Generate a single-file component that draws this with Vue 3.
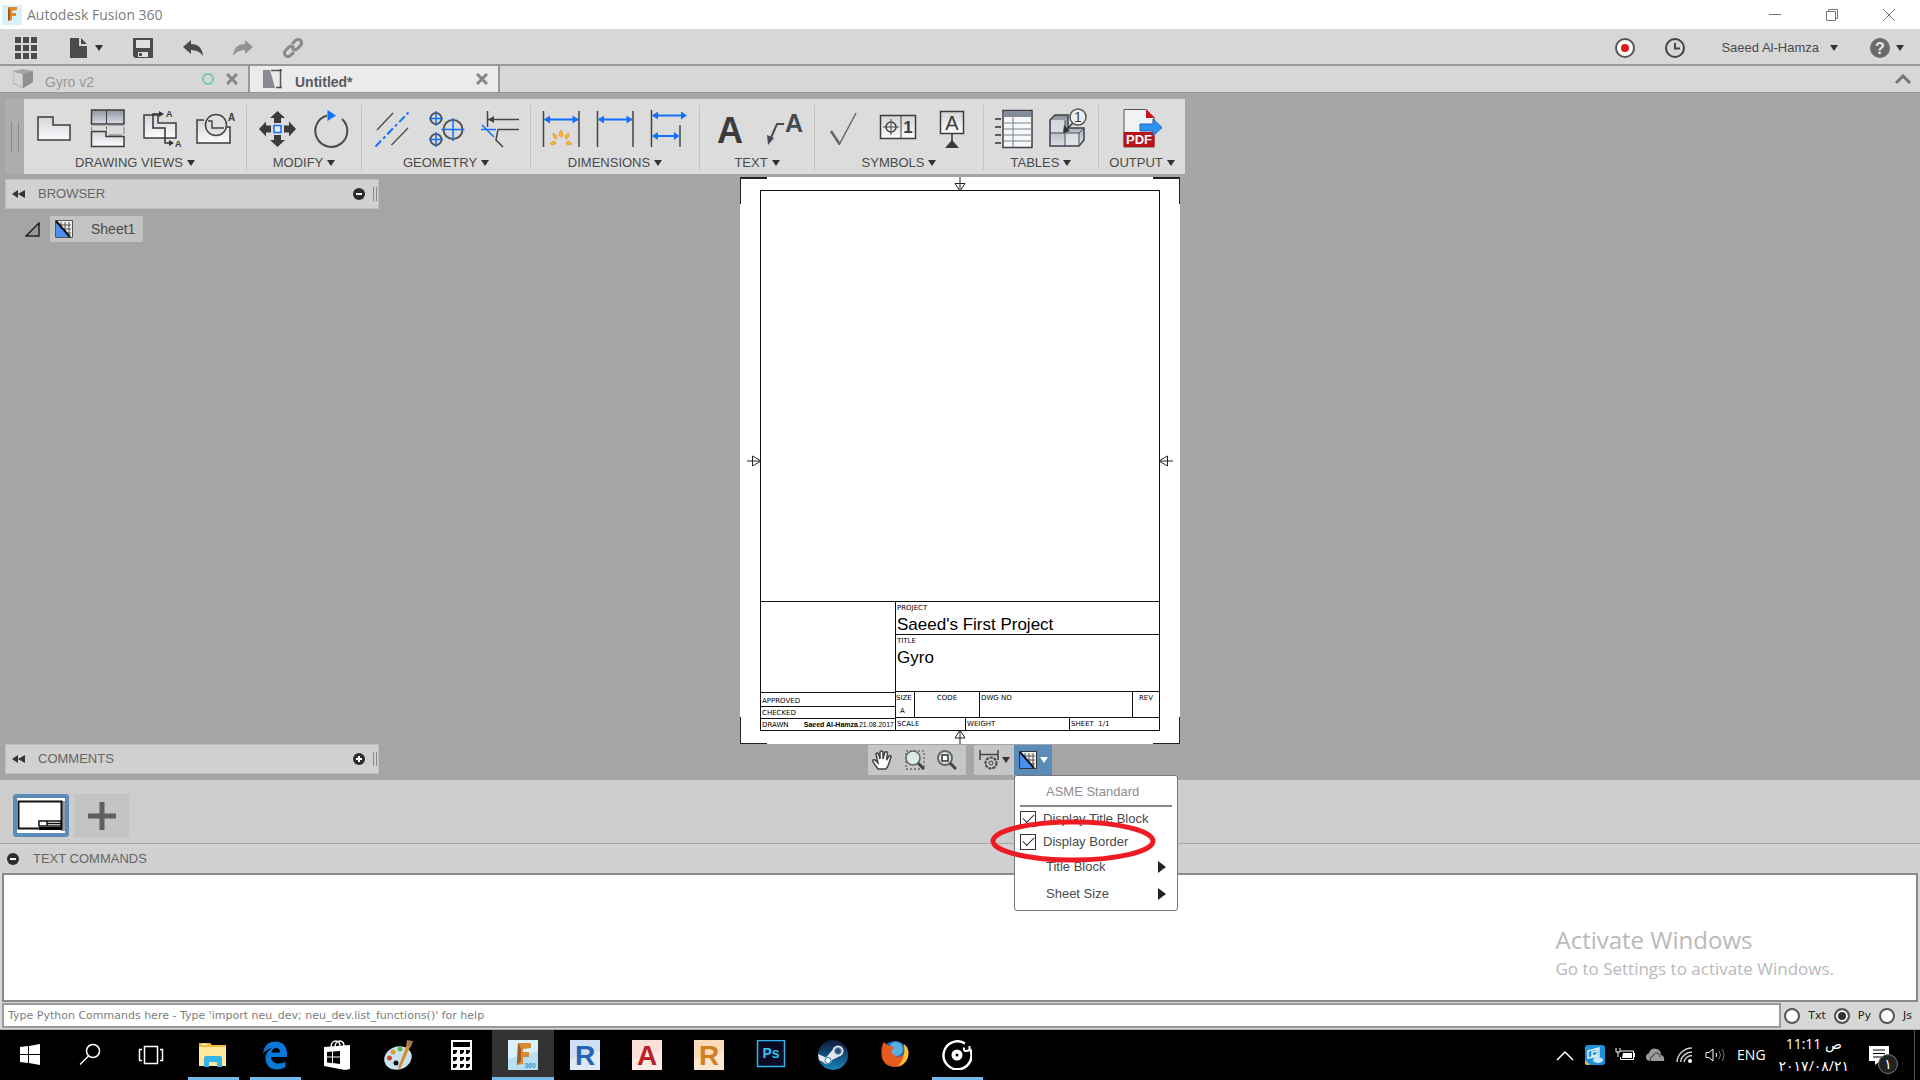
<script setup>
  import { ref } from 'vue'

  const groups = [
    {
      name: 'DRAWING VIEWS',
      tools: [
        { label: 'Base view', svg: '<path d="M6 11H21V19H38V34H6Z" fill="url(#metal)" stroke="#3c3c3c" stroke-width="1.5"/>' },
        { label: 'Projected view', svg: '<path d="M5.5 4H38V18H5.5Z" fill="url(#steel)" stroke="#3c3c3c" stroke-width="1.5"/><path d="M20.5 4V18" stroke="#3c3c3c"/><path d="M5.5 19H19M22 19H38M5.5 21V24M20.5 20V24M38 21V28M23 29H36" stroke="#777" fill="none"/><path d="M5.5 25.5H20V30.5H38V40.5H5.5Z" fill="url(#metal)" stroke="#3c3c3c" stroke-width="1.5"/>' },
        { label: 'Section view', svg: '<path d="M4 9H18V17H36V32H4Z" fill="url(#metal)" stroke="#3c3c3c" stroke-width="1.5"/><path d="M21 8H13V22H25V37H31" fill="none" stroke="#333" stroke-width="1.5"/><path d="M19 5L24 8L19 11ZM29 34L34 37L29 40Z" fill="#333"/><text x="26" y="11" font-size="9" font-weight="bold">A</text><text x="35" y="41" font-size="9" font-weight="bold">A</text>' },
        { label: 'Detail view', svg: '<path d="M3 14H36V37H3Z" fill="url(#metal)"/><path d="M10 14H3V37H36V21H33" fill="none" stroke="#3c3c3c" stroke-width="1.5"/><circle cx="22" cy="19" r="10.5" fill="#dfe0e2" stroke="#444" stroke-width="1.5"/><path d="M14 15H18V22H30" fill="none" stroke="#444" stroke-width="1.5"/><text x="34" y="15" font-size="10" font-weight="bold">A</text>' }
      ]
    },
    {
      name: 'MODIFY',
      tools: [
        { label: 'Move', svg: '<g fill="#3b3b3b"><path d="M22.5 5L30 12H26V17H19V12H15Z"/><path d="M22.5 41L30 34H26V29H19V34H15Z"/><path d="M4 23L11 15.5V19.5H16V26.5H11V30.5Z"/><path d="M41 23L34 15.5V19.5H29V26.5H34V30.5Z"/></g><path d="M19 19.5H26V26.5H19Z" fill="#e6eefa" stroke="#1170ff" stroke-width="1.5"/>' },
        { label: 'Rotate', svg: '<path d="M33 13A16 16 0 1 1 18 9.5" fill="none" stroke="#4b4b4b" stroke-width="2"/><path d="M18.5 4L27 9.5L18.5 15Z" fill="#1170ff"/>' }
      ]
    },
    {
      name: 'GEOMETRY',
      tools: [
        { label: 'Centerline', svg: '<path d="M7 24L23 7M21.5 39L38 22" stroke="#555" stroke-width="1.5"/><path d="M5.5 40.5L38.5 6.5" stroke="#1170ff" stroke-width="2" stroke-dasharray="8 3 3 3"/>' },
        { label: 'Center mark pattern', svg: '<g fill="none" stroke="#555" stroke-width="2"><circle cx="12" cy="12.5" r="5.5"/><circle cx="12" cy="33.5" r="5.5"/><circle cx="29" cy="23.5" r="9.5"/></g><path d="M12 5V20M5 12.5H19M12 26V41M5 33.5H19M29 12V35M17.5 23.5H40.5" stroke="#1170ff" stroke-width="1.5"/>' },
        { label: 'Edge extension', svg: '<path d="M9.5 5V21M10 13.5H41M41 23.5H20L18 34L25 41" fill="none" stroke="#444" stroke-width="1.5"/><path d="M10 13.5L16 10V17Z" fill="#444"/><path d="M3 23.5H18M4 19L16 31" stroke="#1170ff" stroke-width="1.5"/>' }
      ]
    },
    {
      name: 'DIMENSIONS',
      tools: [
        { label: 'Dimension', svg: '<path d="M4.5 5V41M40 5V41" stroke="#444" stroke-width="1.5"/><path d="M6 13.5H39" stroke="#1170ff" stroke-width="2"/><path d="M5 13.5L11 9.5V17.5ZM39.5 13.5L33.5 9.5V17.5Z" fill="#1170ff"/><g fill="#f9b62c" stroke="#dd7a10" stroke-width=".5"><path d="M22 24Q26 30 22 31Q18 30 22 24Z"/><path d="M14 27Q19 29 17.5 33Q14 33 14 27Z"/><path d="M30 27Q25 29 26.5 33Q30 33 30 27Z"/><path d="M11 38Q15 33 17 37Q16 40 11 38Z"/><path d="M33 38Q29 33 27 37Q28 40 33 38Z"/></g>' },
        { label: 'Linear dimension', svg: '<path d="M4.5 5V41M40 5V41" stroke="#444" stroke-width="1.5"/><path d="M6 13.5H39" stroke="#1170ff" stroke-width="2"/><path d="M5 13.5L11 9.5V17.5ZM39.5 13.5L33.5 9.5V17.5Z" fill="#1170ff"/>' },
        { label: 'Baseline dimension', svg: '<path d="M4.5 4V41M33 19V41" stroke="#444" stroke-width="1.5"/><path d="M6 9.5H38M6 30H31" stroke="#1170ff" stroke-width="2"/><path d="M5 9.5L11 5.5V13.5ZM40 9.5L34 5.5V13.5ZM5 30L11 26V34ZM32.5 30L27 26V34Z" fill="#1170ff"/>' }
      ]
    },
    {
      name: 'TEXT',
      tools: [
        { label: 'Text', svg: '<text x="22" y="37" font-size="36" text-anchor="middle" font-weight="bold">A</text>' },
        { label: 'Leader', svg: '<path d="M22 18H15L8 34" fill="none" stroke="#454a55" stroke-width="2"/><path d="M6 39L5 29L12 32Z" fill="#454a55"/><text x="32" y="26" font-size="25" text-anchor="middle" font-weight="bold" style="fill:#454a55">A</text>' }
      ]
    },
    {
      name: 'SYMBOLS',
      tools: [
        { label: 'Surface texture', svg: '<path d="M8 25L16.5 38" stroke="#666" stroke-width="2.5"/><path d="M16 39L33 7" stroke="#666" stroke-width="1.5"/>' },
        { label: 'Feature control frame', svg: '<path d="M3.5 9.5H38.5V32.5H3.5Z" fill="url(#metal)" stroke="#3c3c3c" stroke-width="1.5"/><path d="M24 9.5V32.5M14 13V29M6 21H22" stroke="#444"/><circle cx="14" cy="21" r="5" fill="none" stroke="#444" stroke-width="1.5"/><text x="31" y="27" font-size="17" font-weight="bold" text-anchor="middle">1</text>' },
        { label: 'Datum identifier', svg: '<path d="M9.5 5.5H32.5V27.5H9.5Z" fill="url(#metal)" stroke="#3c3c3c" stroke-width="1.5"/><path d="M21 28V37" stroke="#333" stroke-width="1.5"/><path d="M21 34L28 42H14Z" fill="#3a3a3a"/><text x="21" y="24" font-size="20" text-anchor="middle">A</text>' }
      ]
    },
    {
      name: 'TABLES',
      tools: [
        { label: 'Table', svg: '<path d="M11 4.5H40V41.5H11Z" fill="#f6f7f9" stroke="#3c4048" stroke-width="1.5"/><path d="M12 5H39V11H12Z" fill="#858c99"/><path d="M21 11V41M11 17H40M11 23H40M11 29H40M11 35H40" stroke="#7b8088"/><path d="M3 13H9M3 21H9M3 29H9M3 37H9" stroke="#333" stroke-width="1.5"/>' },
        { label: 'Balloon', svg: '<path d="M4 14L9 9H22V22H38V34L33 40H4Z" fill="url(#steel)" stroke="#3c4048" stroke-width="1.5"/><path d="M5 14H19V26H5ZM19 27H33V39H19Z" fill="#e3e5ea" opacity=".8"/><path d="M4 27H33L38 22M19 14V40M33 27V40" fill="none" stroke="#4b505a"/><path d="M28 16L20 24" stroke="#333" stroke-width="1.5"/><path d="M17 27L18 19L24 25Z" fill="#333"/><circle cx="32" cy="11" r="8" fill="#eee" stroke="#555" stroke-width="1.5"/><text x="32" y="16" font-size="14" text-anchor="middle">1</text>' }
      ]
    },
    {
      name: 'OUTPUT',
      tools: [
        { label: 'Output PDF', svg: '<path d="M4 3.5H26L34 12V41H4Z" fill="#f1f2f4" stroke="#555"/><path d="M26 3L35 12H26Z" fill="#c4161c"/><path d="M3.5 26H34.5V41H3.5Z" fill="#b9141a"/><path d="M20 18H33V13L42 21.5L33 30V25H20Z" fill="#2f93ee" stroke="#1c62b5"/><text x="19" y="38" font-size="13" text-anchor="middle" font-weight="bold" style="fill:#fff">PDF</text>' }
      ]
    }
  ]

  const letterTile = (letter, color, bg) =>
    `<path d="M1 1H31V31H1Z" fill="${bg}"/><path d="M1 20L31 12V31H1Z" fill="#fff" opacity=".35"/><text x="16" y="26" font-size="28" font-weight="bold" text-anchor="middle" style="fill:${color}">${letter}</text>`

  const pinned = [
    { label: 'Start', svg: '<path d="M6 8L14 7V15H6ZM15 7L26 5V15H15ZM6 16H14V24L6 23ZM15 16H26V26L15 24Z" fill="#fff"/>' },
    { label: 'Search', svg: '<circle cx="19" cy="12" r="6.5" fill="none" stroke="#fff" stroke-width="1.5"/><path d="M14.5 17L6 25.5" stroke="#fff" stroke-width="1.5"/>' },
    { label: 'Task view', svg: '<path d="M9.5 7.5H22.5V24.5H9.5ZM7 10.5H4.5V21.5H7M25 10.5H27.5V21.5H25" fill="none" stroke="#fff" stroke-width="1.5"/>' },
    { label: 'File Explorer', open: true, svg: '<path d="M2 4H13L15 6H29V27H2Z" fill="#f0bd3c"/><path d="M2 8H29V27H2Z" fill="#ffe79b"/><path d="M5 5H10V6H5Z" fill="#fff"/><path d="M7 28V19Q7 17 9 17H23Q25 17 25 19V28H20V24Q20 23 19 23H13Q12 23 12 24V28Z" fill="#35b4ea"/>' },
    { label: 'Edge', open: true, svg: '<path d="M4 15C5 6 10 2.5 16.5 2.5C24 2.5 28 8 28 14V18H12C12 22 15.5 24.5 19.5 24.5C22.5 24.5 25 23.5 26.5 22.5V28C24.5 29.5 21.5 30.5 18 30.5C11 30.5 6.5 26 6.5 19.5C6.5 14.5 9 11.5 13 9.5C9.5 9.5 6 11.5 4 15ZM12.5 13.5H21C21 10.5 19.5 9 17 9C14.5 9 13 11 12.5 13.5Z" fill="#0a78d7"/>' },
    { label: 'Store', svg: '<path d="M10 8C10 0 20 0 19 8M14 8C14 0 24 0 23 8" fill="none" stroke="#fff" stroke-width="1.5"/><path d="M3 8L29 6V30L24 31L3 27Z" fill="#fff"/><path d="M6 13L11 12.5V17.5H6ZM12 12.5L19 12V17.5H12ZM6 18.5H11V24L6 23.5ZM12 18.5H19V25L12 24Z" fill="#000"/>' },
    { label: 'Paint', svg: '<ellipse cx="15" cy="19" rx="14" ry="11.5" fill="#c9e2ef" transform="rotate(-20 15 19)"/><circle cx="13" cy="24" r="2.5" fill="#111"/><circle cx="6.5" cy="19" r="2.5" fill="#d9423c"/><circle cx="10" cy="13" r="2.5" fill="#e29b38"/><circle cx="17" cy="10" r="2.5" fill="#5db548"/><path d="M28 6L17 30L15 29L24 5Z" fill="#d98c34"/><path d="M24 1L30 2L28 8L23 6Z" fill="#a17652"/>' },
    { label: 'Calculator', svg: '<path d="M6 1H27V31H6Z" fill="#fff"/><path d="M8 3H25V8H8Z" fill="#000"/><path d="M8 11h4v2l-2 2h-2ZM15 11h4v2l-2 2h-2ZM21 11h4v2l-2 2h-2ZM8 18h4v2l-2 2h-2ZM15 18h4v2l-2 2h-2ZM21 18h4v2l-2 2h-2ZM8 25h4v2l-2 2h-2ZM15 25h4v2l-2 2h-2ZM21 25h4v2l-2 2h-2Z" fill="#000"/>' },
    { label: 'Fusion 360', open: true, active: true, svg: '<path d="M1 1H31V31H1Z" fill="#d9f1fb"/><path d="M1 20L31 12V31H1Z" fill="#b7e0f2"/><path d="M11 4L24 4V9L16 10V13L22 13V18H16V25L10 26Z" fill="#d98a35"/><path d="M11 4L14 9V22L10 26Z" fill="#a55d1e"/><text x="23" y="29" font-size="7" font-weight="bold" text-anchor="middle" style="fill:#1ba4dc">360</text>' },
    { label: 'Revit', svg: letterTile('R', '#2464b4', '#cfdff3') },
    { label: 'AutoCAD', svg: letterTile('A', '#bb2026', '#fbe0d8') },
    { label: 'ReCap', svg: letterTile('R', '#d27e24', '#fbdcb8') },
    { label: 'Photoshop', svg: '<path d="M2.500 1.500H29.500V27.500H2.500Z" fill="#0c0a22" stroke="#2fb5ea" stroke-width="1.5"/><text x="16" y="19" font-size="14" font-weight="bold" text-anchor="middle" style="fill:#2fc4f2">Ps</text>' },
    { label: 'Steam', svg: '<circle cx="16" cy="16" r="15" fill="url(#steam)"/><circle cx="21" cy="12" r="4.5" fill="#23507e" stroke="#e4e8ee" stroke-width="2"/><path d="M1 15L9 18.5L15.5 11L22 17.5L15 21A5 5 0 0 1 6 23L2 21Z" fill="#e4e8ee"/><circle cx="21" cy="12" r="3.5" fill="#23507e" stroke="#9fb4ca"/><circle cx="11" cy="21.5" r="3" fill="#fff" stroke="#2a76ab"/>' },
    { label: 'Firefox', svg: '<circle cx="16" cy="15" r="13" fill="#2669b0"/><circle cx="17" cy="10" r="7" fill="#55b1e4"/><path d="M5 3L9 7Q13 6 15 9L12 12Q17 21 24 16Q28 12 25 5Q31 10 29 18Q26 28 16 28Q3 27 2.5 15Q2 8 5 3Z" fill="#e65a20"/><path d="M25 5Q31 10 29 18Q26 26 19 27Q27 20 25 5Z" fill="#f9c22e"/>' },
    { label: 'Groove Music', open: true, svg: '<path d="M24 4.500A14 14 0 1 0 29 10" fill="none" stroke="#fff" stroke-width="2.500"/><path d="M28.500 7V11Q22 14 23 8.500" fill="none" stroke="#fff" stroke-width="2"/><circle cx="16" cy="16" r="3.500" fill="none" stroke="#fff" stroke-width="4"/>' }
  ]

  const tray = [
    { label: 'Show hidden icons', svg: '<path d="M2 15L10 7L18 15" fill="none" stroke="#fff" stroke-width="1.5"/>' },
    { label: 'Intel graphics', svg: '<rect x="0" y="0" width="20" height="20" rx="3" fill="#1b92d8"/><path d="M3 6L14 3V11L3 13ZM7 7L12 6V10L7 11Z" fill="none" stroke="#d5effc" stroke-width="1.5"/><ellipse cx="13" cy="15" rx="5" ry="3" fill="#c9e9fa"/><path d="M0 15L5 20H2Q0 20 0 18Z" fill="#f3c23d"/>' },
    { label: 'Battery', svg: '<path d="M5.5 6H18.5V14.5H5.5V12" fill="none" stroke="#fff"/><path d="M8 8H17V13H7Z" fill="#fff"/><path d="M1 3V7H5V3M3 7V12" fill="none" stroke="#fff"/><path d="M19 8H20V12H19Z" fill="#fff"/>' },
    { label: 'OneDrive', svg: '<path d="M2 15Q-1 10 4 8Q6 2 12 4Q16 5 16 10Q20 11 19 16H5Z" fill="#9a9a9a"/><path d="M6 16Q4 12 8 11Q10 6 14 9Q15 10 15 12" fill="none" stroke="#333"/>' },
    { label: 'Wi-Fi', svg: '<path d="M2 17A15 15 0 0 1 17 3M5.5 17A11.5 11.5 0 0 1 17 7M9 17A8 8 0 0 1 17 10.5" fill="none" stroke="#ccc" stroke-width="1.5"/><circle cx="15" cy="16" r="2" fill="#fff"/>' },
    { label: 'Volume', svg: '<path d="M1 7.5H4L8 4V16L4 12.5H1Z" fill="none" stroke="#fff"/><path d="M11 8Q12.5 10 11 12" fill="none" stroke="#fff"/><path d="M14 6Q17 10 14 14M17 4Q21 10 17 16" fill="none" stroke="#777"/>' }
  ]

  const showTitleBlock = ref(true)
  const showBorder = ref(true)
  const language = ref('Py')
  const command = ref('')
  const output = ref('')
</script>

<template>
  <div class="app">
    <svg class="defs" aria-hidden="true">
      <defs>
        <linearGradient id="metal" x1="0" y1="0" x2="0" y2="1">
          <stop offset="0" stop-color="#d3d5da" /><stop offset="1" stop-color="#fbfbfc" />
        </linearGradient>
        <linearGradient id="steel" x1="0" y1="0" x2="0" y2="1">
          <stop offset="0" stop-color="#8f94a1" /><stop offset="1" stop-color="#dcdee4" />
        </linearGradient>
        <linearGradient id="steam" x1="0" y1="0" x2="0" y2="1">
          <stop offset="0" stop-color="#111b38" /><stop offset="1" stop-color="#1683bd" />
        </linearGradient>
      </defs>
    </svg>

    <header class="titlebar">
      <svg width="20" height="20" viewBox="0 0 20 20">
        <path d="M0 0H20V20H0Z" fill="#d9f0fa" />
        <path d="M6 2H15V5L10 6V8H14V11H10V15L6 16Z" fill="#e08a2e" />
        <path d="M6 2L8 5V14L6 16Z" fill="#a8561c" />
      </svg>
      <h1>Autodesk Fusion 360</h1>
      <div class="window-buttons">
        <button aria-label="Minimize"><svg width="12" height="12"><path d="M0 5.5H12" /></svg></button>
        <button aria-label="Restore"><svg width="12" height="12"><path d="M.5 2.5H9.5V11.5H.5ZM2.5 2.5V.5H11.5V9.5H9.5" /></svg></button>
        <button aria-label="Close"><svg width="12" height="12"><path d="M0 0L12 12M12 0L0 12" /></svg></button>
      </div>
    </header>

    <nav class="quickbar">
      <div class="quick-left">
        <button class="apps" aria-label="Data panel">
          <svg width="22" height="22" fill="#4b4b4b"><path d="M0 0h6v6h-6ZM8 0h6v6h-6ZM16 0h6v6h-6ZM0 8h6v6h-6ZM8 8h6v6h-6ZM16 8h6v6h-6ZM0 16h6v6h-6ZM8 16h6v6h-6ZM16 16h6v6h-6Z" /></svg>
        </button>
        <button class="file" aria-label="File">
          <svg width="17" height="20" fill="#4b4b4b"><path d="M0 0H9V8H17V20H0ZM11 0L17 6H11Z" /></svg>
          <i class="caret"></i>
        </button>
        <button aria-label="Save">
          <svg width="20" height="20"><path d="M0 0H20V20H2L0 18Z" fill="#4b4b4b" /><path d="M3 2H17V10H3Z" fill="#e0e0e0" /><path d="M5 14H15V19H5Z" fill="#e0e0e0" /><path d="M6 15H9V18H6Z" fill="#4b4b4b" /></svg>
        </button>
        <button aria-label="Undo">
          <svg width="20" height="20"><path d="M0 9L8 2V6Q19 6 20 18Q16 12 8 12V16Z" fill="#4b4b4b" /></svg>
        </button>
        <button aria-label="Redo">
          <svg width="20" height="20"><path d="M20 9L12 2V6Q1 6 0 18Q4 12 12 12V16Z" fill="#939393" /></svg>
        </button>
        <button aria-label="Link">
          <svg width="20" height="20" fill="none" stroke="#8a8a8a" stroke-width="3"><path d="M9 6L12 3Q15 0 17.5 2.5Q20 5 17 8L14 11Q11 13 9 10M11 14L8 17Q5 20 2.5 17.5Q0 15 3 12L6 9Q9 7 11 10" /></svg>
        </button>
      </div>
      <div class="quick-right">
        <button aria-label="Record">
          <svg width="20" height="20"><circle cx="10" cy="10" r="9" fill="#fff" stroke="#555" stroke-width="2" /><circle cx="10" cy="10" r="4" fill="#e21414" /></svg>
        </button>
        <button aria-label="Job status">
          <svg width="20" height="20" fill="none" stroke="#444" stroke-width="2"><circle cx="10" cy="10" r="9" /><path d="M10 5V10.5H15" /></svg>
        </button>
        <button class="user">Saeed Al-Hamza <i class="caret"></i></button>
        <button class="help" aria-label="Help">
          <svg width="20" height="20"><circle cx="10" cy="10" r="10" fill="#6b6b6b" /><text x="10" y="16" font-size="16" font-weight="bold" text-anchor="middle" fill="#e8e8e8">?</text></svg>
          <i class="caret"></i>
        </button>
      </div>
    </nav>

    <div class="tabs">
      <div class="tab">
        <svg width="20" height="20"><path d="M0 2L10 0L20 2V13L10 19L0 14Z" fill="#a6a6a6" /><path d="M0 2L10 5V19L0 14Z" fill="#d4d6d6" stroke="#aaa" /><path d="M10 5L20 2V13L10 19Z" fill="#8f8f8f" /></svg>
        <span>Gyro v2</span>
        <svg class="state" width="12" height="12"><circle cx="6" cy="6" r="5" fill="none" stroke="#74c9b4" stroke-width="2" /></svg>
        <button aria-label="Close Gyro v2"><svg width="12" height="12"><path d="M1 1L11 11M11 1L1 11" /></svg></button>
      </div>
      <div class="tab active">
        <svg width="20" height="20"><path d="M0 1L7 1L12 19H0Z" fill="#8a8a92" /><path d="M8 1.5H19M17.5 0V19M13 18.5H19" fill="none" stroke="#555" stroke-width="1.5" /></svg>
        <span>Untitled*</span>
        <button aria-label="Close Untitled"><svg width="12" height="12"><path d="M1 1L11 11M11 1L1 11" /></svg></button>
      </div>
      <button class="collapse" aria-label="Collapse toolbar"><svg width="16" height="10"><path d="M1 9L8 2L15 9" fill="none" stroke="#777" stroke-width="3" /></svg></button>
    </div>

    <main class="workspace">
      <div class="ribbon">
        <div class="grip"></div>
        <section v-for="group in groups" :key="group.name" class="group">
          <div class="tools">
            <button v-for="tool in group.tools" :key="tool.label" :aria-label="tool.label">
              <svg width="44" height="44" viewBox="0 0 44 44" v-html="tool.svg"></svg>
            </button>
          </div>
          <button class="group-name">{{ group.name }} <i class="caret"></i></button>
        </section>
      </div>

      <div class="stage">
        <aside class="side">
          <div class="panel">
            <svg width="13" height="8"><path d="M6 0V8L0 4ZM13 0V8L6 4Z" fill="#333" /></svg>
            <h2>BROWSER</h2>
            <button aria-label="Collapse browser"><svg width="12" height="12"><circle cx="6" cy="6" r="6" fill="#2d2d2d" /><path d="M3 6H9" stroke="#fff" stroke-width="2" /></svg></button>
            <i class="handle"></i>
          </div>
          <div class="tree">
            <svg width="15" height="15"><path d="M1 14L14 1V14Z" fill="#999" stroke="#222" stroke-width="1.5" /></svg>
            <button class="node">
              <svg width="18" height="18" viewBox="0 0 18 18"><path d="M.5.5H17.5V17.5H.5Z" fill="#eee" stroke="#555" /><path d="M4 5H16M4 9H16M4 13H16M6 2V16M10 2V16M14 2V16" stroke="#555" /><path d="M1 2L14 17H1Z" fill="#4a8ff0" /><path d="M1 1L15 17" stroke="#111" stroke-width="2" /></svg>
              Sheet1
            </button>
          </div>
          <div class="panel bottom">
            <svg width="13" height="8"><path d="M6 0V8L0 4ZM13 0V8L6 4Z" fill="#333" /></svg>
            <h2>COMMENTS</h2>
            <button aria-label="Expand comments"><svg width="12" height="12"><circle cx="6" cy="6" r="6" fill="#2d2d2d" /><path d="M3 6H9M6 3V9" stroke="#fff" stroke-width="2" /></svg></button>
            <i class="handle"></i>
          </div>
        </aside>

        <div class="canvas">
          <div class="paper">
            <i class="corner tl"></i><i class="corner tr"></i><i class="corner bl"></i><i class="corner br"></i>
            <svg class="mark top" width="12" height="14"><path d="M6 0V14M1 6.5H11L6 14Z" /></svg>
            <svg class="mark right" width="14" height="12"><path d="M14 6H0M8.5 1V11L0 6Z" /></svg>
            <svg class="mark bottom" width="12" height="14"><path d="M6 14V0M1 8H11L6 0Z" /></svg>
            <svg class="mark left" width="14" height="12"><path d="M0 6H14M5.5 1V11L14 6Z" /></svg>
            <div class="frame">
              <div class="title-block">
                <div class="signoff">
                  <div class="blank"></div>
                  <div class="line approved">APPROVED</div>
                  <div class="line">CHECKED</div>
                  <div class="line drawn">DRAWN <b>Saeed Al-Hamza</b> <span>21.08.2017</span></div>
                </div>
                <div class="info">
                  <div class="cell project">PROJECT<strong>Saeed's First Project</strong></div>
                  <div class="cell title">TITLE<strong>Gyro</strong></div>
                  <div class="codes">
                    <div>SIZE<span>A</span></div>
                    <div class="center">CODE</div>
                    <div>DWG NO</div>
                    <div class="center">REV</div>
                  </div>
                  <div class="scales">
                    <div>SCALE</div>
                    <div>WEIGHT</div>
                    <div>SHEET&nbsp; 1/1</div>
                  </div>
                </div>
              </div>
            </div>
          </div>

          <div class="navbar">
            <div class="nav-group view">
              <button aria-label="Pan"><svg width="20" height="20"><path d="M6 19L1 12Q0 9 3 10L6 13L4 4Q5 2 6.5 4L8 9L8 2Q9.5 0 11 2L11 9L13 2Q15 1 15.5 3L14.5 10L17 6Q19 5 19 7L16 16L14 19Z" fill="#fff" stroke="#444" stroke-width="1.5" /></svg></button>
              <button aria-label="Zoom window"><svg width="20" height="20"><path d="M1 1H19V19H1Z" fill="none" stroke="#444" stroke-dasharray="2 2" /><circle cx="8" cy="8" r="7" fill="#d9ebe9" stroke="#666" stroke-width="1.5" /><path d="M13 13L19 19" stroke="#444" stroke-width="3" /></svg></button>
              <button aria-label="Fit"><svg width="20" height="20"><circle cx="8" cy="8" r="7" fill="#d9ebe9" stroke="#666" stroke-width="2" /><path d="M5 5H11V11H5Z" fill="#fff" stroke="#333" stroke-width="1.5" /><path d="M13 13L19 19" stroke="#444" stroke-width="3" /></svg></button>
            </div>
            <div class="nav-group">
              <button class="drop" aria-label="Annotation settings">
                <svg width="20" height="20" fill="none" stroke="#444"><path d="M1 0V10M19 0V10M1 4.5H19" stroke-width="1.5" /><circle cx="12" cy="13" r="5.5" stroke-width="2" stroke-dasharray="3 1" /><circle cx="12" cy="13" r="2" /></svg>
                <i class="caret"></i>
              </button>
              <div class="menu-anchor">
                <button class="drop on" aria-label="Sheet settings">
                  <svg width="18" height="18" viewBox="0 0 18 18"><path d="M.5.5H17.5V17.5H.5Z" fill="#eee" stroke="#333" /><path d="M4 5H16M4 9H16M4 13H16M6 2V16M10 2V16M14 2V16" stroke="#555" /><path d="M1 2L14 17H1Z" fill="#4a8ff0" /><path d="M1 1L15 17" stroke="#111" stroke-width="2" /></svg>
                  <i class="caret"></i>
                </button>
                <div class="menu">
                  <p>ASME Standard</p>
                  <label><input v-model="showTitleBlock" type="checkbox" />Display Title Block</label>
                  <label><input v-model="showBorder" type="checkbox" />Display Border</label>
                  <button>Title Block <i></i></button>
                  <button>Sheet Size <i></i></button>
                  <svg class="ring" viewBox="0 0 166 44"><ellipse cx="83" cy="22" rx="80" ry="19" /></svg>
                </div>
              </div>
            </div>
          </div>
        </div>
      </div>
    </main>

    <div class="sheets">
      <button class="thumb" aria-label="Sheet 1">
        <svg width="48" height="36"><path d="M0 0H48V36H0Z" fill="#fff" /><path d="M44 3H48V33H44Z" fill="#999" /><path d="M1.5 3.5H44.5V30.5H1.5Z" fill="none" stroke="#111" stroke-width="2" /><path d="M22 23H44V28H22ZM30 23V28M30 25.5H44" fill="none" stroke="#111" stroke-width="1.5" /><path d="M22 29H45V32H22Z" /></svg>
      </button>
      <button class="add" aria-label="Add sheet"><svg width="28" height="28"><path d="M14 0V28M0 14H28" stroke="#5f5f5f" stroke-width="5" /></svg></button>
    </div>

    <section class="commands">
      <div class="commands-head">
        <button aria-label="Collapse text commands"><svg width="12" height="12"><circle cx="6" cy="6" r="6" fill="#2d2d2d" /><path d="M3 6H9" stroke="#fff" stroke-width="2" /></svg></button>
        <h2>TEXT COMMANDS</h2>
      </div>
      <textarea v-model="output" aria-label="Text commands output" readonly></textarea>
      <form class="prompt" @submit.prevent>
        <input v-model="command" type="text" aria-label="Command" placeholder="Type Python Commands here - Type 'import neu_dev; neu_dev.list_functions()' for help" />
        <label v-for="name in ['Txt', 'Py', 'Js']" :key="name">
          <input v-model="language" type="radio" name="language" :value="name" />{{ name }}
        </label>
      </form>
      <div class="watermark">
        <p>Activate Windows</p>
        <small>Go to Settings to activate Windows.</small>
      </div>
    </section>

    <footer class="taskbar">
      <button v-for="item in pinned" :key="item.label" :aria-label="item.label" :class="{ open: item.open, active: item.active }">
        <svg width="30" height="30" viewBox="1 1 30 30" v-html="item.svg"></svg>
      </button>
      <div class="tray">
        <button v-for="item in tray" :key="item.label" :aria-label="item.label">
          <svg width="20" height="20" viewBox="0 0 20 20" v-html="item.svg"></svg>
        </button>
        <span class="lang">ENG</span>
        <div class="clock"><time>11:11 ص</time><time>٢٠١٧/٠٨/٢١</time></div>
        <button class="notify" aria-label="Notifications">
          <svg width="20" height="20"><path d="M0 1H20V16H11L6 20V16H0Z" fill="#fff" /><path d="M4 5H16M4 8.5H16M4 12H16" stroke="#000" /></svg>
          <span>١</span>
        </button>
      </div>
    </footer>
  </div>
</template>

<style>
  body {
    margin: 0;
    background: #a5a5a5;
  }
</style>

<style scoped>
  .app {
    min-height: 100vh;
    display: flex;
    flex-direction: column;
    font: 13px/16px "Liberation Sans", Arial, sans-serif;
    color: #4a4a4a;
  }
  .app * {
    box-sizing: border-box;
  }
    .defs {
      position: absolute;
      width: 0;
      height: 0;
    }
    svg {
      display: block;
      flex: none;
    }
    button {
      border: 0;
      padding: 0;
      margin: 0;
      background: none;
      font: inherit;
      color: inherit;
      display: flex;
      align-items: center;
      justify-content: center;
    }
    h1, h2, p {
      margin: 0;
      font-size: 13px;
      font-weight: normal;
    }
    .caret {
      border: 4px solid transparent;
      border-top: 6px solid #333;
      border-bottom: 0;
    }

  .titlebar {
    height: 29px;
    display: flex;
    align-items: center;
    gap: 5px;
    padding: 0 9px 0 2px;
    background: #fff;
  }
    .titlebar h1 {
      font: 14px/20px "Open Sans", sans-serif;
      color: #7c7c7c;
    }
    .window-buttons {
      display: flex;
      gap: 12px;
      margin-left: auto;
      stroke: #777;
      fill: none;
    }
      .window-buttons button {
        width: 45px;
        height: 28px;
      }

  .quickbar {
    height: 37px;
    display: flex;
    align-items: center;
    justify-content: space-between;
    padding: 2px 16px 0 15px;
    background: #d7d7d7;
    border-bottom: 2px solid #999;
  }
    .quick-left {
      display: flex;
      align-items: center;
      gap: 30px;
    }
      .apps {
        width: 25px;
        justify-content: flex-start;
      }
      .file {
        width: 33px;
        justify-content: space-between;
      }
    .quick-right {
      display: flex;
      align-items: center;
      gap: 30px;
    }
      .user {
        gap: 11px;
        margin: 0 2px 0 6px;
      }
      .help {
        gap: 6px;
      }

  .tabs {
    height: 27px;
    display: flex;
    background: #d7d7d7;
    border-bottom: 1px solid #999;
  }
    .tab {
      width: 250px;
      display: flex;
      align-items: center;
      gap: 12px;
      padding: 0 10px 0 13px;
      border-right: 2px solid #999;
      font-size: 14px;
      color: #999;
    }
      .tab span {
        padding-top: 5px;
      }
      .tab button {
        margin-left: auto;
        stroke: #858585;
        stroke-width: 3;
      }
      .tab .state {
        margin-left: auto;
      }
      .tab .state + button {
        margin-left: 0;
      }
    .tab.active {
      background: #ebebeb;
      font-weight: bold;
      color: #5a5a5a;
    }
    .collapse {
      margin: 0 9px 0 auto;
    }

  .workspace {
    flex: 1;
    display: flex;
    flex-direction: column;
    gap: 3px;
    padding: 6px 0 5px 0;
    background: #a5a5a5;
  }
    .ribbon {
      align-self: flex-start;
      display: flex;
      height: 75px;
      margin-left: 5px;
      background: #dcdcdc;
    }
      .grip {
        width: 19px;
        background: #adadad;
        display: grid;
        place-items: center;
      }
      .grip::after {
        content: "";
        width: 6px;
        height: 30px;
        border: solid #8a8a8a;
        border-width: 0 1px;
      }
      .group {
        min-width: 86px;
        display: flex;
        flex-direction: column;
        align-items: center;
        gap: 2px;
        margin: 6px 0 4px;
        padding: 0 3px;
        border-right: 1px solid #c3c3c3;
      }
      .group:last-child {
        border: 0;
      }
      .tools {
        display: flex;
      }
        .tools button {
          width: 54px;
          height: 46px;
        }
        .tools svg :deep(text) {
          font-family: "Liberation Sans", Arial, sans-serif;
          fill: #3b3b3b;
        }
      .group-name {
        gap: 4px;
        line-height: 20px;
      }

    .stage {
      flex: 1;
      display: grid;
      grid-template-columns: 1fr auto 1fr;
    }
      .side {
        width: 374px;
        display: flex;
        flex-direction: column;
        margin: 2px 0 1px 5px;
      }
        .panel {
          height: 30px;
          display: flex;
          align-items: center;
          padding: 0 1px 0 6px;
          background: #d1d1d1;
          border: 1px solid #bdbdbd;
          color: #666;
        }
        .panel.bottom {
          margin-top: auto;
        }
          .panel h2 {
            margin-left: 13px;
          }
          .panel button {
            margin-left: auto;
          }
          .handle {
            width: 4px;
            height: 14px;
            margin-left: 8px;
            border: solid #888;
            border-width: 0 1px;
          }
        .tree {
          display: flex;
          align-items: center;
          gap: 10px;
          padding: 7px 0 0 20px;
        }
          .node {
            height: 26px;
            gap: 18px;
            padding: 0 8px 0 5px;
            background: #c3c3c3;
            font-size: 14px;
          }

      .canvas {
        display: flex;
        flex-direction: column;
        align-items: center;
        gap: 1px;
      }
        .paper {
          position: relative;
          flex: 1;
          width: 440px;
          padding: 13px 20px;
          display: flex;
          background: #fff;
        }
          .corner {
            position: absolute;
            width: 27px;
            height: 27px;
            border: 0 solid #222;
          }
          .tl {
            top: 0;
            left: 0;
            border-width: 2px 0 0 1px;
          }
          .tr {
            top: 0;
            right: 0;
            border-width: 2px 1px 0 0;
          }
          .bl {
            bottom: 0;
            left: 0;
            border-width: 0 0 1px 1px;
          }
          .br {
            bottom: 0;
            right: 0;
            border-width: 0 1px 1px 0;
          }
          .mark {
            position: absolute;
            fill: none;
            stroke: #222;
          }
          .mark.top {
            top: 0;
            left: 214px;
          }
          .mark.bottom {
            bottom: 0;
            left: 214px;
          }
          .mark.left {
            top: calc(50% - 6px);
            left: 7px;
          }
          .mark.right {
            top: calc(50% - 6px);
            right: 7px;
          }
          .frame {
            flex: 1;
            display: flex;
            align-items: flex-end;
            border: 1px solid #111;
          }
          .title-block {
            width: 100%;
            display: grid;
            grid-template-columns: 135px 1fr;
            border-top: 1px solid #111;
            font: 7px/8px "DejaVu Sans", sans-serif;
            color: #000;
          }
            .signoff {
              display: flex;
              flex-direction: column;
              border-right: 1px solid #111;
            }
              .blank {
                flex: 1;
              }
              .line {
                height: 12px;
                padding: 2px 1px;
                border-top: 1px solid #111;
              }
              .line.approved {
                height: 14px;
                padding-top: 4px;
              }
              .drawn {
                display: flex;
                white-space: nowrap;
              }
              .drawn b {
                margin-left: auto;
                font-family: "Liberation Sans", Arial, sans-serif;
              }
              .drawn span {
                margin-left: 1px;
                font-family: "Liberation Sans", Arial, sans-serif;
              }
            .cell {
              padding: 2px 1px;
              border-bottom: 1px solid #111;
            }
              .cell strong {
                display: block;
                padding-top: 4px;
                font: 17px/18px "Liberation Sans", Arial, sans-serif;
              }
            .project {
              height: 33px;
            }
            .title {
              height: 57px;
            }
            .codes, .scales {
              display: grid;
            }
            .codes {
              height: 26px;
              grid-template-columns: 19px 65px 1fr 26px;
              border-bottom: 1px solid #111;
            }
            .scales {
              height: 12px;
              grid-template-columns: 70px 104px 1fr;
            }
              .codes > div, .scales > div {
                padding: 2px 1px 0;
                border-right: 1px solid #111;
                white-space: nowrap;
              }
              .codes > div:last-child, .scales > div:last-child {
                border: 0;
              }
              .codes > .center {
                text-align: center;
              }
              .codes > div:first-child {
                padding: 2px 0 0;
              }
              .codes span {
                display: block;
                padding: 5px 4px 0;
              }

        .navbar {
          display: flex;
          gap: 8px;
        }
          .nav-group {
            height: 30px;
            display: flex;
            background: #c6c6c6;
          }
          .view {
            width: 98px;
            justify-content: space-between;
            padding: 0 9px 0 4px;
          }
          .drop {
            width: 40px;
            height: 30px;
            gap: 3px;
          }
          .drop.on {
            width: 38px;
            background: #5a8cb7;
          }
          .drop.on .caret {
            border-top-color: #fff;
          }
          .menu-anchor {
            position: relative;
          }
          .menu {
            position: absolute;
            z-index: 2;
            top: 30px;
            left: 0;
            width: 164px;
            padding: 0 5px 3px;
            background: #fff;
            border: 1px solid #777;
            border-radius: 3px;
          }
            .menu p {
              height: 31px;
              padding: 8px 26px;
              border-bottom: 2px solid #888;
              color: #8d8d8d;
            }
            .menu label {
              height: 23px;
              display: flex;
              align-items: center;
              gap: 7px;
            }
            .menu input {
              appearance: none;
              width: 16px;
              height: 16px;
              margin: 0;
              display: grid;
              place-items: center;
              border: 1px solid #333;
            }
            .menu input:checked::after {
              content: "";
              width: 10px;
              height: 5px;
              margin-bottom: 3px;
              border: solid #333;
              border-width: 0 0 1px 1px;
              transform: rotate(-45deg);
            }
            .menu button {
              width: 100%;
              height: 27px;
              justify-content: space-between;
              padding: 0 6px 0 26px;
            }
            .menu button i {
              border: 6px solid transparent;
              border-left: 8px solid #222;
              border-right: 0;
            }
            .ring {
              position: absolute;
              top: 43px;
              left: -25px;
              width: 166px;
              height: 44px;
              fill: none;
              stroke: #ed1c24;
              stroke-width: 5;
              pointer-events: none;
            }

  .sheets {
    height: 63px;
    display: flex;
    gap: 5px;
    padding: 14px 13px 6px;
    background: #cdcdcd;
  }
    .thumb {
      width: 56px;
      border: 4px solid #5a8cb7;
      border-radius: 3px;
      overflow: hidden;
    }
    .add {
      width: 55px;
      background: #c3c3c3;
    }

  .commands {
    position: relative;
    background: #d7d7d7;
    border-top: 1px solid #a8a8a8;
  }
    .commands-head {
      height: 29px;
      display: flex;
      align-items: center;
      gap: 14px;
      padding-left: 7px;
      background: #d1d1d1;
      color: #666;
    }
    textarea {
      display: block;
      width: calc(100% - 4px);
      height: 129px;
      margin: 0 2px;
      border: 2px solid #8a8a8a;
      background: #fff;
      outline: 0;
      resize: none;
    }
    .prompt {
      height: 28px;
      display: flex;
      align-items: center;
      gap: 8px;
      padding: 0 8px 0 2px;
      border-bottom: 1px solid #aaa;
      font: 11px/16px "DejaVu Sans", Verdana, sans-serif;
      color: #222;
    }
      .prompt input[type="text"] {
        flex: 1;
        height: 25px;
        margin-right: -5px;
        padding: 0 4px;
        border: 2px solid #999;
        background: #fff;
        font: inherit;
      }
      .prompt input::placeholder {
        color: #7d7d7d;
        opacity: 1;
      }
      .prompt label {
        display: flex;
        align-items: center;
        gap: 8px;
      }
      .prompt input[type="radio"] {
        appearance: none;
        width: 16px;
        height: 16px;
        margin: 0;
        border: 2px solid #555;
        border-radius: 50%;
        background: #fff;
      }
      .prompt input[type="radio"]:checked {
        background: #333;
        box-shadow: inset 0 0 0 2px #fff;
      }
    .watermark {
      position: absolute;
      right: 86px;
      bottom: 48px;
      font-family: "Open Sans", sans-serif;
      color: #b9b9b9;
      pointer-events: none;
    }
      .watermark p {
        font-size: 24px;
        line-height: 32px;
      }
      .watermark small {
        font-size: 17px;
        line-height: 26px;
      }

  .taskbar {
    height: 50px;
    display: flex;
    background: #000;
    color: #fff;
  }
    .taskbar > button {
      width: 62px;
    }
    .taskbar > button:nth-child(-n + 2) {
      width: 60px;
    }
    .taskbar > .open {
      position: relative;
    }
    .taskbar > .open::after {
      content: "";
      position: absolute;
      bottom: 0;
      width: 51px;
      height: 3px;
      background: #76b9ed;
    }
    .taskbar > .active {
      background: #333;
    }
    .taskbar > .active::after {
      width: 100%;
    }
    .taskbar svg :deep(text) {
      font-family: "Liberation Sans", Arial, sans-serif;
    }
    .tray {
      display: flex;
      align-items: center;
      gap: 10px;
      margin-left: auto;
      margin-right: 5px;
      padding-right: 25px;
      border-right: 1px solid #555;
      font: 14px/22px "Open Sans", "DejaVu Sans", sans-serif;
    }
      .lang {
        margin-left: 2px;
      }
      .clock {
        margin: 0 10px 0 3px;
        display: flex;
        flex-direction: column;
        align-items: center;
        direction: ltr;
      }
      .clock time {
        unicode-bidi: bidi-override;
      }
      .notify {
        position: relative;
      }
      .notify span {
        position: absolute;
        top: 9px;
        left: 9px;
        width: 20px;
        height: 20px;
        border: 1px solid #777;
        border-radius: 50%;
        background: #222;
        line-height: 18px;
      }
</style>
